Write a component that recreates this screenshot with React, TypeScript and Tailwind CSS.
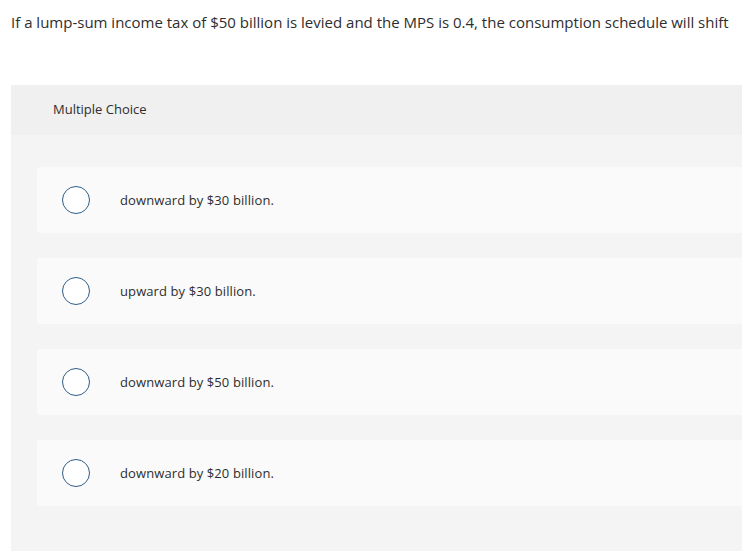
const options = [
  'downward by $30 billion.',
  'upward by $30 billion.',
  'downward by $50 billion.',
  'downward by $20 billion.',
];

function Radio(): JSX.Element {
  return <span className="block w-[28px] h-[28px] rounded-full border-[1.5px] border-[#2f5d88] bg-white shrink-0" />;
}

export default function App(): JSX.Element {
  return (
    <div className="w-[742px] h-[551px] overflow-hidden bg-white text-[#2e2e2e]" style={{ fontFamily: '"Open Sans", "Liberation Sans", sans-serif' }}>
      <p className="pl-[11px] pt-[12px] text-[15px] leading-[20px] whitespace-nowrap">
        If a lump-sum income tax of $50 billion is levied and the MPS is 0.4, the consumption schedule will shift
      </p>
      <div className="ml-[11px] mt-[53px] w-[760px] bg-[#f4f4f4]">
        <div className="h-[50px] flex items-center pl-[42px] bg-[#f0f0f0] text-[13px]">Multiple Choice</div>
        <div className="pt-[32px] pl-[26px] pb-[60px] flex flex-col gap-[25px]">
          {options.map((o) => (
            <div key={o} className="h-[66px] rounded-[3px] bg-[#fafafa] flex items-center pl-[25px]">
              <Radio />
              <span className="ml-[30px] mt-[2px] text-[13px] tracking-[0.1px]">{o}</span>
            </div>
          ))}
        </div>
      </div>
    </div>
  );
}
